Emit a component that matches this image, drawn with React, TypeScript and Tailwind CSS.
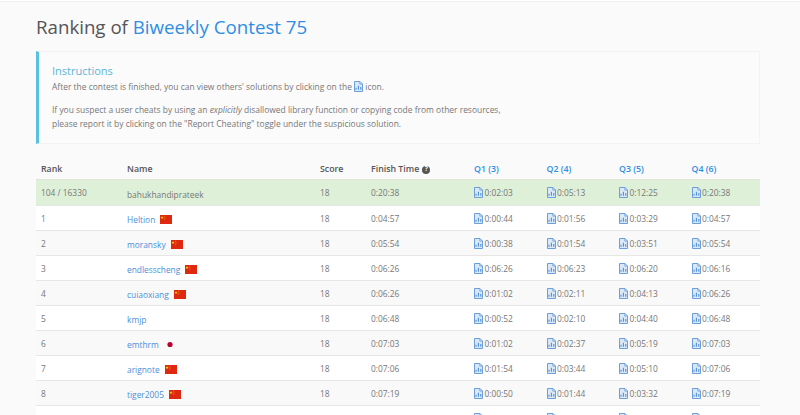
import React from "react";

const Doc = () => (
  <svg width="9" height="11" viewBox="0 0 9 11" className="shrink-0" fill="none">
    <path d="M.5.5H6L8.5 3V10.5H.5Z" fill="#dbe8f8" stroke="#6a9fdc" strokeWidth="1" />
    <path d="M5.8.6V3.1H8.4" stroke="#6a9fdc" strokeWidth=".8" />
    <path d="M2 8.8V6.8M4.4 8.8V4.8M6.8 8.8V6" stroke="#4f8fd6" strokeWidth="1.1" />
  </svg>
);

const Flag = ({ kind }: { kind: "cn" | "jp" }) =>
  kind === "cn" ? (
    <svg width="12" height="9" viewBox="0 0 12 9" className="ml-[5px] shrink-0">
      <rect width="12" height="9" fill="#de2910" />
      <path d="M2 1l.4 1.1h1.1l-.9.7.3 1.1-.9-.7-.9.7.3-1.1-.9-.7h1.1Z" fill="#ffde00" />
      <circle cx="4.5" cy="1.1" r=".35" fill="#ffde00" />
      <circle cx="5" cy="2.1" r=".35" fill="#ffde00" />
      <circle cx="5" cy="3.2" r=".35" fill="#ffde00" />
      <circle cx="4.4" cy="4.1" r=".35" fill="#ffde00" />
    </svg>
  ) : (
    <svg width="12" height="9" viewBox="0 0 12 9" className="ml-[5px] shrink-0">
      <circle cx="6" cy="4.5" r="2.6" fill="#bc002d" />
    </svg>
  );

const rows: [string, string, "cn" | "jp" | null, string, string, string, string, string][] = [
  ["1", "Heltion", "cn", "0:04:57", "0:00:44", "0:01:56", "0:03:29", "0:04:57"],
  ["2", "moransky", "cn", "0:05:54", "0:00:38", "0:01:54", "0:03:51", "0:05:54"],
  ["3", "endlesscheng", "cn", "0:06:26", "0:06:26", "0:06:23", "0:06:20", "0:06:16"],
  ["4", "cuiaoxiang", "cn", "0:06:26", "0:01:02", "0:02:11", "0:04:13", "0:06:26"],
  ["5", "kmjp", null, "0:06:48", "0:00:52", "0:02:10", "0:04:40", "0:06:48"],
  ["6", "emthrm", "jp", "0:07:03", "0:01:02", "0:02:37", "0:05:19", "0:07:03"],
  ["7", "arignote", "cn", "0:07:06", "0:01:54", "0:03:44", "0:05:10", "0:07:06"],
  ["8", "tiger2005", "cn", "0:07:19", "0:00:50", "0:01:44", "0:03:32", "0:07:19"],
  ["9", "Tiger_Yang_xy", "cn", "0:07:49", "0:01:04", "0:04:06", "0:06:06", "0:07:49"],
];

const cols = "grid grid-cols-[86px_193px_51px_104px_72.5px_72.5px_72.5px_72.5px]";

const Time = ({ t }: { t: string }) => (
  <div className="flex h-[13px] items-center gap-[1.5px] pl-[4px]">
    <Doc />
    <span>{t}</span>
  </div>
);

export default function App() {
  return (
    <div className="h-[414px] overflow-hidden bg-[#fafafa] border-t border-[#eeeeee] mt-px font-['Open_Sans',sans-serif] text-[8.4px] text-[#777777]">
      <div className="mx-9 w-[724px]">
        <h1 className="mt-[11px] h-[38px] text-[18.7px] leading-[28px] font-medium text-[#555555]">
          Ranking of <span className="text-[#2f8ee4]">Biweekly Contest 75</span>
        </h1>
        <div className="h-[93px] bg-[#fbfbfb] border border-[#f3f3f3] border-l-[3px] border-l-[#5bc0de] pl-[13px] pt-[11px] text-[8.45px] leading-[13px] text-[#777777]">
          <div className="text-[11px] leading-[15px] text-[#5bb5d8]">Instructions</div>
          <p className="mt-[2px] flex items-center">
            After the contest is finished, you can view others' solutions by clicking on the&nbsp;
            <Doc />
            &nbsp;icon.
          </p>
          <p className="mt-[10px] leading-[13.5px]">
            If you suspect a user cheats by using an <em>explicitly</em> disallowed library function or copying code from other resources,
            <br />
            please report it by clicking on the "Report Cheating" toggle under the suspicious solution.
          </p>
        </div>
        <div className="mt-[11px]">
          <div className={`${cols} h-[24px] items-center pt-[5px] text-[8.8px] font-semibold text-[#555555]`}>
            <div className="pl-[5px]">Rank</div>
            <div className="pl-[5px]">Name</div>
            <div className="pl-[5px]">Score</div>
            <div className="pl-[5px] flex items-center gap-[3px]">
              Finish Time
              <span className="flex h-[8px] w-[8px] items-center justify-center rounded-full bg-[#555555] text-[6.5px] leading-none font-bold text-white">?</span>
            </div>
            {["Q1 (3)", "Q2 (4)", "Q3 (5)", "Q4 (6)"].map((q) => (
              <div key={q} className="pl-[4px] text-[#2f8ee4]">{q}</div>
            ))}
          </div>
          <div className={`${cols} h-[26px] bg-[#dff0d8] border-t border-[#dde5d8] pt-[6px] leading-[13px]`}>
            <div className="pl-[5px]">104 / 16330</div>
            <div className="pl-[5px] pt-[2px]">bahukhandiprateek</div>
            <div className="pl-[5px]">18</div>
            <div className="pl-[5px]">0:20:38</div>
            {["0:02:03", "0:05:13", "0:12:25", "0:20:38"].map((t) => (
              <Time key={t} t={t} />
            ))}
          </div>
          {rows.map((r, i) => (
            <div
              key={r[0]}
              className={`${cols} h-[25px] border-t border-[#e6e6e6] pt-[6px] leading-[13px] ${i % 2 === 0 ? "bg-white" : "bg-[#f9f9f9]"}`}
            >
              <div className="pl-[5px]">{r[0]}</div>
              <div className="pl-[5px] flex items-center h-[15px] text-[#4a90d9]">
                <span>{r[1]}</span>
                {r[2] && <Flag kind={r[2]} />}
              </div>
              <div className="pl-[5px]">18</div>
              <div className="pl-[5px]">{r[3]}</div>
              {r.slice(4).map((t, j) => (
                <Time key={j} t={t as string} />
              ))}
            </div>
          ))}
        </div>
      </div>
    </div>
  );
}
